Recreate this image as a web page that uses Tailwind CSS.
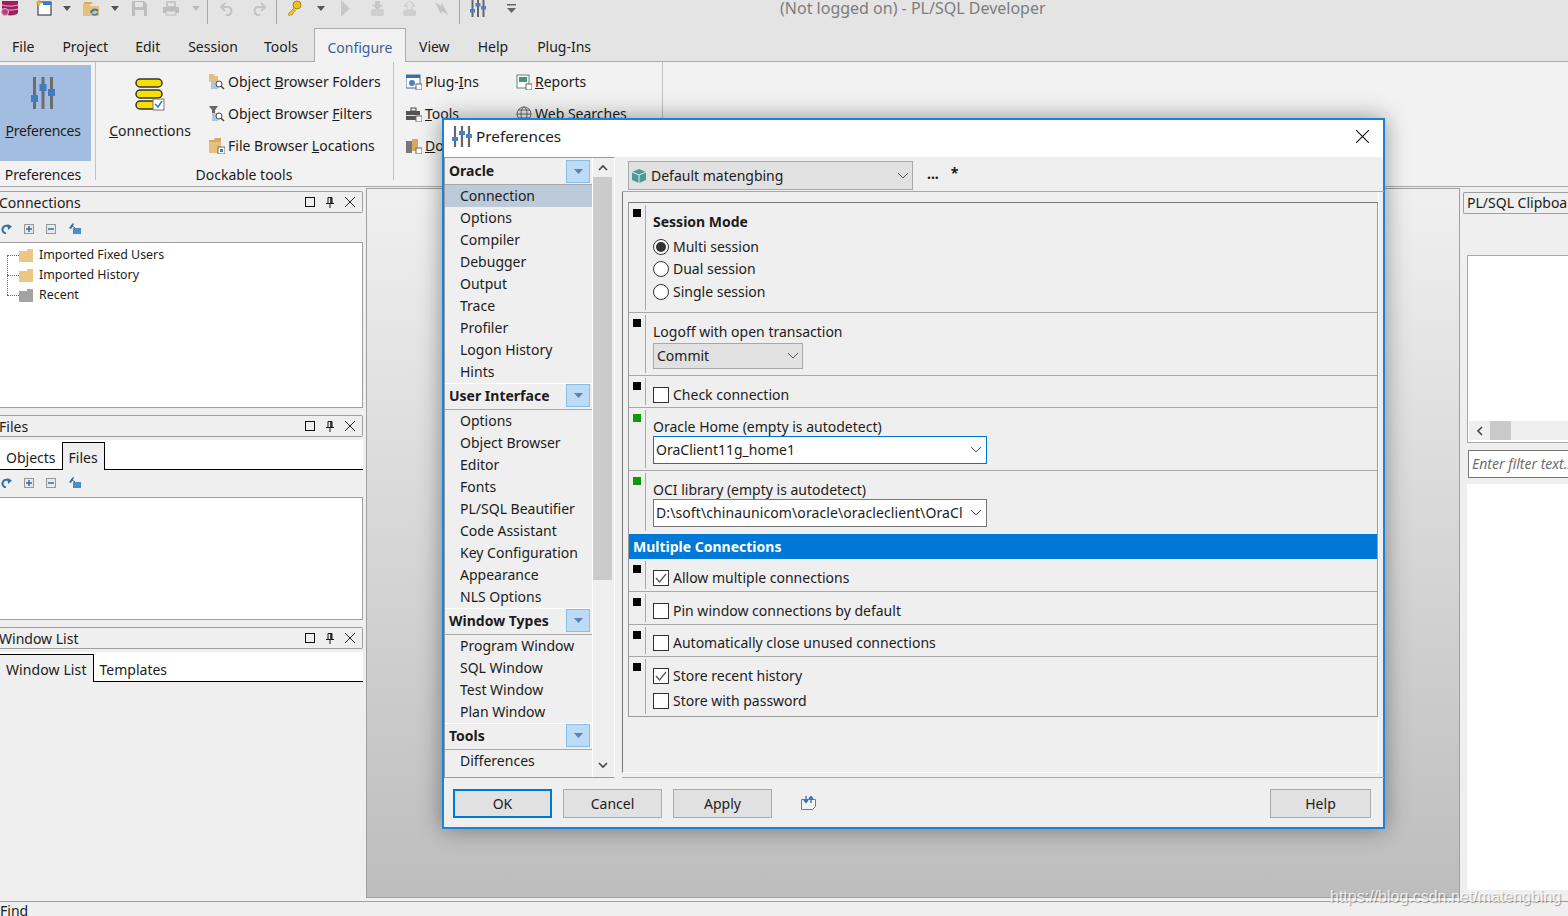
<!DOCTYPE html>
<html>
<head>
<meta charset="utf-8">
<script src="https://cdn.jsdelivr.net/npm/@tailwindcss/browser@4"></script>
</head>
<body class="m-0">
<div class="relative w-[1568px] h-[916px] overflow-hidden flex flex-col bg-[#efefef] text-[#1c1c1c] text-[14px] leading-[20px] font-['Noto_Sans',sans-serif]">

  <!-- quick access toolbar -->
  <div class="h-[28px] shrink-0 bg-[#e4e4e4] relative">
    <div class="h-[17px] flex items-center">
      <svg class="ml-[1px] w-[18px] h-[19px]" viewBox="0 0 18 19"><path d="M1 2h16v12c-2 3-10 3-16 1z" fill="#a31d5c"/><path d="M1 6c4 1.500 12 1.500 16 0M1 10c4 1.500 12 1.500 16 0" stroke="#e8b6cc" fill="none"/><circle cx="4" cy="13" r="3.500" fill="#b0417c" stroke="#e8b6cc"/></svg>
      <svg class="ml-[17px] w-[16px] h-[17px]" viewBox="0 0 16 17"><rect x="2" y="2" width="13" height="13" fill="#fff" stroke="#222"/><rect x="7" y="2" width="8" height="3" fill="#3a7cc0"/><path d="M3 0v6M0 3h6" stroke="#e8b23a" stroke-width="1.500"/></svg>
      <svg class="ml-[11px] w-[9px] h-[5px]" viewBox="0 0 9 5"><path d="M0 0h8L4 5z" fill="#555"/></svg>
      <svg class="ml-[11px] w-[17px] h-[16px]" viewBox="0 0 17 16"><path d="M0 3h6l2 2h8v10H0z" fill="#e8c07a"/><path d="M1 1h7l2 2H1z" fill="#d9a760"/><path d="M8 12a4 4 0 0 1 7-2" stroke="#2f7ec0" stroke-width="2" fill="none"/><path d="M9 13a4 4 0 0 0 6-1" stroke="#2f7ec0" stroke-width="1.500" fill="none"/></svg>
      <svg class="ml-[11px] w-[9px] h-[5px]" viewBox="0 0 9 5"><path d="M0 0h8L4 5z" fill="#555"/></svg>
      <svg class="ml-[12px] w-[15px] h-[15px]" viewBox="0 0 15 15"><path d="M0 0h12l3 3v12H0z" fill="#bdbdbd"/><rect x="3" y="1" width="8" height="5" fill="#e4e4e4"/><rect x="3" y="9" width="9" height="6" fill="#e4e4e4"/></svg>
      <svg class="ml-[16px] w-[16px] h-[15px]" viewBox="0 0 16 15"><rect x="4" y="1" width="8" height="5" fill="none" stroke="#bdbdbd" stroke-width="1.500"/><rect x="0" y="6" width="16" height="6" fill="#bdbdbd"/><rect x="3" y="10" width="10" height="4" fill="#e4e4e4" stroke="#bdbdbd"/></svg>
      <svg class="ml-[13px] w-[9px] h-[5px]" viewBox="0 0 9 5"><path d="M0 0h8L4 5z" fill="#bdbdbd"/></svg>
      <div class="ml-[6px] w-px h-[24px] bg-[#a6a6a6] mt-[7px]"></div>
      <svg class="ml-[12px] w-[15px] h-[14px]" viewBox="0 0 15 14"><path d="M5 1 1 5l4 4M1 5h8a4.500 4.500 0 0 1 0 8H6" fill="none" stroke="#c4c4c4" stroke-width="2"/></svg>
      <svg class="ml-[16px] w-[15px] h-[14px]" viewBox="0 0 15 14"><path d="M10 1l4 4-4 4M14 5H6a4.500 4.500 0 0 0 0 8h3" fill="none" stroke="#c4c4c4" stroke-width="2"/></svg>
      <div class="ml-[10px] w-px h-[24px] bg-[#a6a6a6] mt-[7px]"></div>
      <svg class="ml-[10px] w-[15px] h-[17px]" viewBox="0 0 15 17"><circle cx="10" cy="5" r="4" fill="#f0c020" stroke="#a88410"/><path d="M7 8 1 14l1.500 2L4 14.500l1 .5 1-2 3-3" fill="#f0c020" stroke="#a88410" stroke-width=".7"/></svg>
      <svg class="ml-[15px] w-[9px] h-[5px]" viewBox="0 0 9 5"><path d="M0 0h8L4 5z" fill="#555"/></svg>
      <svg class="ml-[15px] w-[9px] h-[17px]" viewBox="0 0 9 17"><path d="M0 0l9 8.500L0 17z" fill="#c8c8c8"/></svg>
      <svg class="ml-[21px] w-[13px] h-[15px]" viewBox="0 0 13 15"><path d="M4 0h5v4h3L6.500 9 1 4h3z" fill="#c8c8c8"/><rect x="0" y="8" width="13" height="7" rx="2" fill="#cfcfcf"/></svg>
      <svg class="ml-[19px] w-[13px] h-[15px]" viewBox="0 0 13 15"><path d="M6.500 0 12 5H9v4H4V5H1z" fill="#e4e4e4" stroke="#c8c8c8"/><rect x="0" y="9" width="13" height="6" rx="2" fill="#cfcfcf"/></svg>
      <svg class="ml-[19px] w-[13px] h-[13px]" viewBox="0 0 13 13"><path d="M0 0l6 4 1-3 6 12-6-4-1 3z" fill="#c4c4c4"/></svg>
      <div class="ml-[11px] w-px h-[24px] bg-[#a6a6a6] mt-[7px]"></div>
      <svg class="ml-[10px] w-[16px] h-[17px]" viewBox="0 0 16 17"><path d="M2.500 0v17M8 0v17M13.500 0v17" stroke="#666" stroke-width="2"/><rect x="0" y="9" width="5" height="3.500" fill="#4a82c2"/><rect x="5.500" y="3" width="5" height="3.500" fill="#4a82c2"/><rect x="11" y="6" width="5" height="3.500" fill="#4a82c2"/></svg>
      <svg class="ml-[21px] w-[9px] h-[9px]" viewBox="0 0 9 9"><path d="M0 0h9v1.500H0zM0 4h9L4.500 9z" fill="#666"/></svg>
      <span class="ml-[264px] -mt-[1px] text-[#7d7d7d] text-[16px] whitespace-nowrap">(Not logged on) - PL/SQL Developer</span>
    </div>
  </div>

  <!-- ribbon tabs -->
  <div class="h-[34px] shrink-0 bg-[#e4e4e4] border-b border-[#ababab] flex items-start relative">
    <span class="ml-[12px] mt-[9px]">File</span>
    <span class="ml-[28px] mt-[9px]">Project</span>
    <span class="ml-[27px] mt-[9px]">Edit</span>
    <span class="ml-[28px] mt-[9px]">Session</span>
    <span class="ml-[26px] mt-[9px]">Tools</span>
    <span class="ml-[16px] w-[92px] h-[34px] pt-[9px] text-center text-[#3c5f96] bg-[#f2f2f2] border border-b-0 border-[#ababab]">Configure</span>
    <span class="ml-[13px] mt-[9px]">View</span>
    <span class="ml-[28px] mt-[9px]">Help</span>
    <span class="ml-[29px] mt-[9px]">Plug-Ins</span>
  </div>

  <!-- ribbon body -->
  <div class="h-[125px] shrink-0 bg-[#f2f2f2] border-b border-[#a8a8a8] flex">
    <div class="w-[96px] shrink-0 border-r border-[#c2c2c2] h-[118px] flex flex-col pt-[3px]">
      <div class="w-[91px] h-[96px] shrink-0 bg-[#a3bde0] flex flex-col items-center pr-[5px]">
        <svg class="mt-[12px] w-[24px] h-[32px] shrink-0" viewBox="0 0 24 32"><path d="M3.500 0v32M12 0v32M20.500 0v32" stroke="#6d6d6d" stroke-width="3"/><rect x="0" y="18" width="7" height="7" fill="#3f7cc0"/><rect x="8.500" y="7" width="7" height="7" fill="#3f7cc0"/><rect x="17" y="12" width="7" height="7" fill="#3f7cc0"/></svg>
        <span class="mt-[12px] tracking-[-0.25px]"><u>P</u>references</span>
      </div>
      <span class="w-[86px] text-center mt-[4px] shrink-0 tracking-[-0.15px]">Preferences</span>
    </div>
    <div class="w-[298px] shrink-0 border-r border-[#c2c2c2] h-[118px] flex flex-col">
      <div class="h-[98px] shrink-0 flex">
        <div class="w-[113px] flex flex-col items-center pt-[16px] pr-[5px]">
          <svg class="w-[30px] h-[33px] shrink-0" viewBox="0 0 30 33"><rect x="1" y="1" width="26" height="8" rx="4" fill="#f5e000" stroke="#333" stroke-width="1.500"/><rect x="1" y="12" width="26" height="8" rx="4" fill="#f5e000" stroke="#333" stroke-width="1.500"/><rect x="1" y="23" width="26" height="8" rx="4" fill="#f5e000" stroke="#333" stroke-width="1.500"/><rect x="18" y="21" width="11" height="11" fill="#fff" stroke="#777"/><path d="M20 26l3 3 4-6" fill="none" stroke="#3a78c0" stroke-width="1.500"/></svg>
          <span class="mt-[10px]"><u>C</u>onnections</span>
        </div>
        <div class="flex flex-col pt-[10px] gap-[12px]">
          <div class="h-[20px] flex items-center gap-[3px] whitespace-nowrap"><svg class="w-[16px] h-[16px] shrink-0" viewBox="0 0 16 16"><path d="M0 0h5l1 2h3v6H0z" fill="#e8c07a"/><rect x="2" y="8" width="7" height="7" fill="#a9c8dc"/><circle cx="10" cy="10" r="3" fill="#fff" stroke="#444"/><path d="M12 12l3 3" stroke="#444" stroke-width="1.500"/></svg><span>Object <u>B</u>rowser Folders</span></div>
          <div class="h-[20px] flex items-center gap-[3px] whitespace-nowrap"><svg class="w-[16px] h-[16px] shrink-0" viewBox="0 0 16 16"><path d="M0 0h9L6 4v6H3V4z" fill="#666"/><rect x="3" y="7" width="6" height="8" fill="#a9c8dc"/><circle cx="10" cy="10" r="3" fill="#fff" stroke="#444"/><path d="M12 12l3 3" stroke="#444" stroke-width="1.500"/></svg><span>Object Browser <u>F</u>ilters</span></div>
          <div class="h-[20px] flex items-center gap-[3px] whitespace-nowrap"><svg class="w-[16px] h-[16px] shrink-0" viewBox="0 0 16 16"><path d="M0 2h5l1-2h6v5H0z" fill="#d9a760"/><rect x="0" y="4" width="12" height="11" fill="#e8c07a"/><rect x="9" y="9" width="7" height="7" fill="#fff" stroke="#666"/><rect x="11" y="11" width="3" height="3" fill="#3a78c0"/></svg><span>File Browser <u>L</u>ocations</span></div>
        </div>
      </div>
      <span class="text-center mt-[5px] pr-[1px] shrink-0">Dockable tools</span>
    </div>
    <div class="w-[269px] shrink-0 border-r border-[#c2c2c2] h-[118px] flex pt-[10px] pl-[12px]">
      <div class="w-[110px] flex flex-col gap-[12px]">
        <div class="h-[20px] flex items-center gap-[3px] whitespace-nowrap"><svg class="w-[16px] h-[16px] shrink-0" viewBox="0 0 16 16"><rect x="0" y="1" width="14" height="13" fill="#fff" stroke="#3a6ea8"/><rect x="0" y="1" width="14" height="3" fill="#3a6ea8"/><circle cx="6" cy="9" r="3" fill="#4a82c2"/><rect x="10" y="10" width="6" height="6" fill="#fff" stroke="#666"/></svg><span>Plug-<u>I</u>ns</span></div>
        <div class="h-[20px] flex items-center gap-[3px] whitespace-nowrap"><svg class="w-[16px] h-[16px] shrink-0" viewBox="0 0 16 16"><rect x="5" y="2" width="5" height="3" fill="none" stroke="#444"/><rect x="0" y="5" width="14" height="9" fill="#555"/><rect x="0" y="9" width="14" height="1" fill="#ddd"/><rect x="10" y="10" width="6" height="6" fill="#fff" stroke="#666"/></svg><span><u>T</u>ools</span></div>
        <div class="h-[20px] flex items-center gap-[3px] whitespace-nowrap"><svg class="w-[16px] h-[16px] shrink-0" viewBox="0 0 16 16"><rect x="0" y="3" width="6" height="12" fill="#777"/><rect x="6" y="1" width="6" height="12" fill="#d9a760"/><rect x="10" y="10" width="6" height="6" fill="#fff" stroke="#666"/></svg><span><u>D</u>ocuments</span></div>
      </div>
      <div class="flex flex-col gap-[12px]">
        <div class="h-[20px] flex items-center gap-[3px] whitespace-nowrap"><svg class="w-[16px] h-[16px] shrink-0" viewBox="0 0 16 16"><rect x="1" y="1" width="12" height="13" fill="#fff" stroke="#4d8f78"/><rect x="3" y="3" width="8" height="5" fill="#4d8f78"/><rect x="10" y="10" width="6" height="6" fill="#fff" stroke="#666"/></svg><span><u>R</u>eports</span></div>
        <div class="h-[20px] flex items-center gap-[3px] whitespace-nowrap"><svg class="w-[16px] h-[16px] shrink-0" viewBox="0 0 16 16"><circle cx="8" cy="8" r="7" fill="none" stroke="#666"/><ellipse cx="8" cy="8" rx="3" ry="7" fill="none" stroke="#666"/><path d="M1 8h14M2 4h12M2 12h12" stroke="#666"/></svg><span>Web Searches</span></div>
      </div>
    </div>
  </div>

  <!-- main area -->
  <div class="flex-1 min-h-0 flex">
    <!-- left dock -->
    <div class="w-[363px] shrink-0 flex flex-col pt-[4px]">
      <div class="h-[22px] shrink-0 border border-l-0 border-[#a0a0a0] rounded-r-[2px] flex items-center justify-between pr-[7px]">
        <span class="-ml-px pt-[2px]">Connections</span>
        <div class="flex items-center gap-[10px]">
          <svg class="w-[10px] h-[10px]" viewBox="0 0 10 10"><rect x=".5" y=".5" width="9" height="9" fill="none" stroke="#111"/></svg>
          <svg class="w-[10px] h-[11px]" viewBox="0 0 10 11"><path d="M3 .5h4v6H3zM1 6.500h8M5 7v4" fill="none" stroke="#111"/><path d="M6 1v5" stroke="#111" stroke-width="1.500"/></svg>
          <svg class="w-[10px] h-[10px]" viewBox="0 0 10 10"><path d="M0 0l10 10M10 0 0 10" stroke="#222"/></svg>
        </div>
      </div>
      <div class="h-[29px] shrink-0 flex items-center pl-[1px] pt-[2px]">
        <svg class="w-[11px] h-[10px]" viewBox="0 0 11 10"><path d="M5 9.500A4 4 0 0 1 1.500 5 4 4 0 0 1 7 2" fill="none" stroke="#2f6fae" stroke-width="2"/><path d="M6.500 0 11 2.500 7 6z" fill="#2f6fae"/></svg>
        <svg class="ml-[12px] w-[10px] h-[10px]" viewBox="0 0 10 10"><rect x=".5" y=".5" width="9" height="9" fill="#e8e8e8" stroke="#999"/><path d="M2 5h6M5 2v6" stroke="#2f6fae" stroke-width="1.500"/></svg>
        <svg class="ml-[12px] w-[10px] h-[10px]" viewBox="0 0 10 10"><rect x=".5" y=".5" width="9" height="9" fill="#e8e8e8" stroke="#999"/><path d="M2 5h6" stroke="#2f6fae" stroke-width="1.500"/></svg>
        <svg class="ml-[13px] w-[12px] h-[11px]" viewBox="0 0 12 11"><path d="M0 5l4-5 1 1-3 5z" fill="#2f6fae"/><rect x="4" y="5" width="8" height="6" fill="#4a8ed0"/><path d="M2 2l4 3" stroke="#555"/></svg>
      </div>
      <div class="h-[166px] shrink-0 bg-white border border-l-0 border-[#a0a0a0] relative pt-[2px] text-[12.400px]">
        <div class="absolute left-[7px] top-[12px] h-[40px] w-[12px] border-l border-dotted border-[#666]"></div>
        <div class="h-[20px] flex items-center relative"><div class="w-[12px] ml-[7px] border-t border-dotted border-[#666]"></div><svg class="w-[14px] h-[13px]" viewBox="0 0 14 13"><path d="M0 2h8V0h6v13H0z" fill="#ebc685"/></svg><span class="ml-[6px]">Imported Fixed Users</span></div>
        <div class="h-[20px] flex items-center relative"><div class="w-[12px] ml-[7px] border-t border-dotted border-[#666]"></div><svg class="w-[14px] h-[13px]" viewBox="0 0 14 13"><path d="M0 2h8V0h6v13H0z" fill="#ebc685"/></svg><span class="ml-[6px]">Imported History</span></div>
        <div class="h-[20px] flex items-center relative"><div class="w-[12px] ml-[7px] border-t border-dotted border-[#666]"></div><svg class="w-[14px] h-[13px]" viewBox="0 0 14 13"><path d="M0 2h8V0h6v13H0z" fill="#a3a3a3"/></svg><span class="ml-[6px]">Recent</span></div>
      </div>

      <div class="mt-[7px] h-[22px] shrink-0 border border-l-0 border-[#a0a0a0] rounded-r-[2px] flex items-center justify-between pr-[7px]">
        <span class="-ml-px pt-[2px]">Files</span>
        <div class="flex items-center gap-[10px]">
          <svg class="w-[10px] h-[10px]" viewBox="0 0 10 10"><rect x=".5" y=".5" width="9" height="9" fill="none" stroke="#111"/></svg>
          <svg class="w-[10px] h-[11px]" viewBox="0 0 10 11"><path d="M3 .5h4v6H3zM1 6.500h8M5 7v4" fill="none" stroke="#111"/><path d="M6 1v5" stroke="#111" stroke-width="1.500"/></svg>
          <svg class="w-[10px] h-[10px]" viewBox="0 0 10 10"><path d="M0 0l10 10M10 0 0 10" stroke="#222"/></svg>
        </div>
      </div>
      <div class="mt-[3px] h-[30px] shrink-0 bg-white border-b border-black flex items-end">
        <span class="pl-[6px] pr-[6px] h-[27px] pt-[6px]">Objects</span>
        <span class="px-[6px] h-[28px] pt-[5px] bg-[#efefef] border border-b-0 border-black -mb-px">Files</span>
      </div>
      <div class="h-[27px] shrink-0 flex items-center pl-[1px] pb-[2px]">
        <svg class="w-[11px] h-[10px]" viewBox="0 0 11 10"><path d="M5 9.500A4 4 0 0 1 1.500 5 4 4 0 0 1 7 2" fill="none" stroke="#2f6fae" stroke-width="2"/><path d="M6.500 0 11 2.500 7 6z" fill="#2f6fae"/></svg>
        <svg class="ml-[12px] w-[10px] h-[10px]" viewBox="0 0 10 10"><rect x=".5" y=".5" width="9" height="9" fill="#e8e8e8" stroke="#999"/><path d="M2 5h6M5 2v6" stroke="#2f6fae" stroke-width="1.500"/></svg>
        <svg class="ml-[12px] w-[10px] h-[10px]" viewBox="0 0 10 10"><rect x=".5" y=".5" width="9" height="9" fill="#e8e8e8" stroke="#999"/><path d="M2 5h6" stroke="#2f6fae" stroke-width="1.500"/></svg>
        <svg class="ml-[13px] w-[12px] h-[11px]" viewBox="0 0 12 11"><path d="M0 5l4-5 1 1-3 5z" fill="#2f6fae"/><rect x="4" y="5" width="8" height="6" fill="#4a8ed0"/><path d="M2 2l4 3" stroke="#555"/></svg>
      </div>
      <div class="h-[123px] shrink-0 bg-white border border-l-0 border-[#a0a0a0]"></div>

      <div class="mt-[7px] h-[22px] shrink-0 border border-l-0 border-[#a0a0a0] rounded-r-[2px] flex items-center justify-between pr-[7px]">
        <span class="-ml-px pt-[2px]">Window List</span>
        <div class="flex items-center gap-[10px]">
          <svg class="w-[10px] h-[10px]" viewBox="0 0 10 10"><rect x=".5" y=".5" width="9" height="9" fill="none" stroke="#111"/></svg>
          <svg class="w-[10px] h-[11px]" viewBox="0 0 10 11"><path d="M3 .5h4v6H3zM1 6.500h8M5 7v4" fill="none" stroke="#111"/><path d="M6 1v5" stroke="#111" stroke-width="1.500"/></svg>
          <svg class="w-[10px] h-[10px]" viewBox="0 0 10 10"><path d="M0 0l10 10M10 0 0 10" stroke="#222"/></svg>
        </div>
      </div>
      <div class="mt-[3px] h-[30px] shrink-0 bg-white border-b border-black flex items-end">
        <span class="pl-[6px] pr-[6px] h-[28px] pt-[5px] bg-[#efefef] border-t border-r border-black -mb-px whitespace-nowrap tracking-[0.1px]">Window List</span>
        <span class="px-[6px] h-[27px] pt-[6px]">Templates</span>
      </div>
    </div>

    <!-- centre workspace -->
    <div class="ml-[3px] w-[1094px] h-[710px] shrink-0 mt-[1px] border border-[#a0a0a0] bg-gradient-to-b from-[#f0f0f0] to-[#bdbdbd]"></div>

    <!-- right dock -->
    <div class="flex-1 min-w-0 flex flex-col pl-[3px] pt-[5px] overflow-hidden">
      <div class="h-[22px] shrink-0 border border-r-0 border-[#a0a0a0] rounded-l-[2px] flex items-center pl-[3px] whitespace-nowrap overflow-hidden">PL/SQL Clipboard</div>
      <div class="mt-[41px] ml-[4px] h-[188px] shrink-0 bg-white border border-r-0 border-[#a8a8a8] flex flex-col justify-end pb-[2px]">
        <div class="h-[19px] bg-[#efefef] ml-[1px] flex items-center">
          <svg class="ml-[7px] w-[8px] h-[10px]" viewBox="0 0 8 10"><path d="M6 1 2 5l4 4" fill="none" stroke="#444" stroke-width="1.600"/></svg>
          <div class="ml-[6px] w-[21px] h-[19px] bg-[#c9c9c9]"></div>
        </div>
      </div>
      <div class="mt-[7px] ml-[5px] h-[28px] shrink-0 bg-white border border-r-0 border-[#777] flex items-center pl-[3px] italic text-[#6e6e6e] whitespace-nowrap overflow-hidden">Enter filter text...</div>
      <div class="mt-[6px] ml-[4px] h-[406px] shrink-0 bg-white"></div>
    </div>
  </div>

  <!-- status bar -->
  <div class="h-[15px] shrink-0 border-t border-[#a0a0a0] leading-[18px]">Find</div>

  <!-- watermark -->
  <span class="absolute left-[1330px] top-[887px] text-[16px] font-['Liberation_Sans',sans-serif] text-white/80 whitespace-nowrap [text-shadow:1px_1px_1px_rgba(0,0,0,0.35)]">https://blog.csdn.net/matengbing</span>

  <!-- Preferences dialog -->
  <div class="absolute left-[442px] top-[118px] w-[943px] h-[711px] border-2 border-[#1a82d8] bg-[#efefef] shadow-[0_0_22px_rgba(0,0,0,0.4)] flex flex-col">
    <div class="h-[37px] shrink-0 bg-white flex items-center pl-[8px] pr-[14px] pb-[5px]">
      <svg class="w-[20px] h-[21px]" viewBox="0 0 20 21"><path d="M3 0v21M10 0v21M17 0v21" stroke="#666" stroke-width="2.200"/><rect x="0" y="11" width="6" height="4" fill="#4a82c2"/><rect x="7" y="5" width="6" height="4" fill="#4a82c2"/><rect x="14" y="8" width="6" height="4" fill="#4a82c2"/></svg>
      <span class="ml-[4px] text-[15.300px]">Preferences</span>
      <svg class="ml-auto w-[13px] h-[13px]" viewBox="0 0 13 13"><path d="M0 0l13 13M13 0 0 13" stroke="#111" stroke-width="1.100"/></svg>
    </div>
    <div class="h-[619px] shrink-0 flex">
      <!-- category list -->
      <div class="w-[171px] h-[621px] shrink-0 border border-[#9a9a9a] border-r-[#fff] flex overflow-hidden">
        <div class="w-[148px] shrink-0 overflow-hidden border-r border-[#fff]">
          <div class="h-[27px] flex items-center justify-between border-b border-[#a8a8a8] pl-[4px] pr-[2px] font-bold"><span>Oracle</span><span class="w-[24px] h-[23px] bg-[#bddbf4] border border-[#86bdea] flex items-center justify-center"><svg class="w-[9px] h-[5px]" viewBox="0 0 9 5"><path d="M0 0h9L4.500 5z" fill="#5a82b4"/></svg></span></div>
          <div class="h-[22px] pl-[15px] flex items-center bg-[#bccad9]">Connection</div>
          <div class="h-[22px] pl-[15px] flex items-center">Options</div>
          <div class="h-[22px] pl-[15px] flex items-center">Compiler</div>
          <div class="h-[22px] pl-[15px] flex items-center">Debugger</div>
          <div class="h-[22px] pl-[15px] flex items-center">Output</div>
          <div class="h-[22px] pl-[15px] flex items-center">Trace</div>
          <div class="h-[22px] pl-[15px] flex items-center">Profiler</div>
          <div class="h-[22px] pl-[15px] flex items-center">Logon History</div>
          <div class="h-[22px] pl-[15px] flex items-center">Hints</div>
          <div class="h-[27px] flex items-center justify-between border-y border-t-white border-b-[#a8a8a8] pl-[4px] pr-[2px] pb-[2px] font-bold"><span>User Interface</span><span class="w-[24px] h-[23px] bg-[#bddbf4] border border-[#86bdea] flex items-center justify-center"><svg class="w-[9px] h-[5px]" viewBox="0 0 9 5"><path d="M0 0h9L4.500 5z" fill="#5a82b4"/></svg></span></div>
          <div class="h-[22px] pl-[15px] flex items-center">Options</div>
          <div class="h-[22px] pl-[15px] flex items-center">Object Browser</div>
          <div class="h-[22px] pl-[15px] flex items-center">Editor</div>
          <div class="h-[22px] pl-[15px] flex items-center">Fonts</div>
          <div class="h-[22px] pl-[15px] flex items-center">PL/SQL Beautifier</div>
          <div class="h-[22px] pl-[15px] flex items-center">Code Assistant</div>
          <div class="h-[22px] pl-[15px] flex items-center">Key Configuration</div>
          <div class="h-[22px] pl-[15px] flex items-center">Appearance</div>
          <div class="h-[22px] pl-[15px] flex items-center">NLS Options</div>
          <div class="h-[27px] flex items-center justify-between border-y border-t-white border-b-[#a8a8a8] pl-[4px] pr-[2px] pb-[2px] font-bold"><span>Window Types</span><span class="w-[24px] h-[23px] bg-[#bddbf4] border border-[#86bdea] flex items-center justify-center"><svg class="w-[9px] h-[5px]" viewBox="0 0 9 5"><path d="M0 0h9L4.500 5z" fill="#5a82b4"/></svg></span></div>
          <div class="h-[22px] pl-[15px] flex items-center">Program Window</div>
          <div class="h-[22px] pl-[15px] flex items-center">SQL Window</div>
          <div class="h-[22px] pl-[15px] flex items-center">Test Window</div>
          <div class="h-[22px] pl-[15px] flex items-center">Plan Window</div>
          <div class="h-[27px] flex items-center justify-between border-y border-t-white border-b-[#a8a8a8] pl-[4px] pr-[2px] pb-[2px] font-bold"><span>Tools</span><span class="w-[24px] h-[23px] bg-[#bddbf4] border border-[#86bdea] flex items-center justify-center"><svg class="w-[9px] h-[5px]" viewBox="0 0 9 5"><path d="M0 0h9L4.500 5z" fill="#5a82b4"/></svg></span></div>
          <div class="h-[22px] pl-[15px] flex items-center">Differences</div>
        </div>
        <div class="w-[21px] shrink-0 flex flex-col items-start">
          <div class="w-[19px] h-[19px] shrink-0 flex items-center justify-center"><svg class="w-[10px] h-[7px]" viewBox="0 0 10 7"><path d="M1 6l4-4 4 4" fill="none" stroke="#444" stroke-width="1.600"/></svg></div>
          <div class="w-[19px] h-[403px] shrink-0 bg-[#cbcbcb]"></div>
          <div class="w-[19px] mt-auto mb-[2px] h-[20px] shrink-0 flex items-center justify-center"><svg class="w-[10px] h-[7px]" viewBox="0 0 10 7"><path d="M1 1l4 4 4-4" fill="none" stroke="#444" stroke-width="1.600"/></svg></div>
        </div>
      </div>

      <!-- settings pane -->
      <div class="ml-[7px] w-[762px] h-[621px] shrink-0 flex flex-col border-b border-[#a8a8a8]">
        <div class="h-[35px] shrink-0 border-b border-[#a8a8a8] flex items-start pl-[6px] pt-[4px]">
          <div class="w-[285px] h-[29px] bg-[#e1e1e1] border border-[#a8a8a8] flex items-center pl-[3px] pr-[4px]">
            <svg class="w-[14px] h-[14px]" viewBox="0 0 14 14"><path d="M7 0l7 3v8l-7 3-7-3V3z" fill="#4d9a9a"/><path d="M0 3l7 3 7-3M7 6v8" stroke="#d8ecec" fill="none"/></svg>
            <span class="ml-[5px]">Default matengbing</span>
            <svg class="ml-auto w-[10px] h-[6px]" viewBox="0 0 10 6"><path d="M0 0l5 5 5-5" fill="none" stroke="#555"/></svg>
          </div>
          <span class="ml-[14px] mt-[3px] font-bold">...</span>
          <span class="ml-[12px] mt-[2px] font-bold">*</span>
        </div>
        <div class="flex-1 min-h-0 border-l border-[#777] border-r border-r-white border-b border-b-white mr-[5px] mb-[4px] pl-[5px] pt-[10px]">
          <div class="border border-t-[#777] border-x-[#999] border-b-[#999] w-[750px]">
            <!-- Session Mode -->
            <div class="h-[110px] flex border-b border-[#a8a8a8]">
              <div class="w-[16px] shrink-0 pl-[4px] pt-[6px]"><div class="w-[8px] h-[8px] bg-black"></div></div>
              <div class="w-[8px] shrink-0 border-l border-[#a8a8a8] mt-[2px] mb-[2px]"></div>
              <div class="flex flex-col pt-[8px]">
                <div class="h-[22px] flex items-center font-bold">Session Mode</div>
                <div class="h-[22px] mt-[3px] flex items-center gap-[4px]"><span class="w-[16px] h-[16px] rounded-full border border-[#333] bg-white flex items-center justify-center"><span class="w-[10px] h-[10px] rounded-full bg-[#333]"></span></span>Multi session</div>
                <div class="h-[22px] flex items-center gap-[4px]"><span class="w-[16px] h-[16px] rounded-full border border-[#333] bg-white"></span>Dual session</div>
                <div class="h-[24px] flex items-center gap-[4px]"><span class="w-[16px] h-[16px] rounded-full border border-[#333] bg-white"></span>Single session</div>
              </div>
            </div>
            <!-- Logoff -->
            <div class="h-[63px] flex border-b border-[#a8a8a8]">
              <div class="w-[16px] shrink-0 pl-[4px] pt-[6px]"><div class="w-[8px] h-[8px] bg-black"></div></div>
              <div class="w-[8px] shrink-0 border-l border-[#a8a8a8] mt-[2px] mb-[2px]"></div>
              <div class="flex flex-col pt-[9px]">
                <div class="h-[20px] flex items-center">Logoff with open transaction</div>
                <div class="w-[150px] h-[26px] mt-[1px] bg-[#e1e1e1] border border-[#a8a8a8] flex items-center pl-[3px] pr-[4px]">Commit<svg class="ml-auto w-[10px] h-[6px]" viewBox="0 0 10 6"><path d="M0 0l5 5 5-5" fill="none" stroke="#555"/></svg></div>
              </div>
            </div>
            <!-- Check -->
            <div class="h-[32px] flex border-b border-[#a8a8a8]">
              <div class="w-[16px] shrink-0 pl-[4px] pt-[6px]"><div class="w-[8px] h-[8px] bg-black"></div></div>
              <div class="w-[8px] shrink-0 border-l border-[#a8a8a8] mt-[2px] mb-[2px]"></div>
              <div class="h-[24px] mt-[7px] flex items-center gap-[4px]"><span class="w-[16px] h-[16px] border border-[#333] bg-white"></span>Check connection</div>
            </div>
            <!-- Oracle Home -->
            <div class="h-[63px] flex border-b border-[#a8a8a8]">
              <div class="w-[16px] shrink-0 pl-[4px] pt-[6px]"><div class="w-[8px] h-[8px] bg-[#0a9a0a]"></div></div>
              <div class="w-[8px] shrink-0 border-l border-[#a8a8a8] mt-[2px] mb-[2px]"></div>
              <div class="flex flex-col pt-[9px]">
                <div class="h-[19px] flex items-center">Oracle Home (empty is autodetect)</div>
                <div class="w-[334px] h-[28px] bg-white border border-[#0078d7] flex items-center pl-[2px] pr-[5px]">OraClient11g_home1<svg class="ml-auto w-[10px] h-[6px]" viewBox="0 0 10 6"><path d="M0 0l5 5 5-5" fill="none" stroke="#555"/></svg></div>
              </div>
            </div>
            <!-- OCI -->
            <div class="h-[63px] flex">
              <div class="w-[16px] shrink-0 pl-[4px] pt-[6px]"><div class="w-[8px] h-[8px] bg-[#0a9a0a]"></div></div>
              <div class="w-[8px] shrink-0 border-l border-[#a8a8a8] mt-[2px] mb-[3px]"></div>
              <div class="flex flex-col pt-[9px]">
                <div class="h-[19px] flex items-center">OCI library (empty is autodetect)</div>
                <div class="w-[334px] h-[28px] bg-white border border-[#777] flex items-center pl-[2px] pr-[5px]"><span class="w-[309px] overflow-hidden whitespace-nowrap tracking-[0.1px]">D:\soft\chinaunicom\oracle\oracleclient\OraCl</span><svg class="ml-auto w-[10px] h-[6px]" viewBox="0 0 10 6"><path d="M0 0l5 5 5-5" fill="none" stroke="#555"/></svg></div>
              </div>
            </div>
            <!-- header -->
            <div class="h-[25px] bg-[#0078d7] text-white font-bold flex items-center pl-[4px]">Multiple Connections</div>
            <!-- Allow -->
            <div class="h-[33px] flex border-b border-[#a8a8a8]">
              <div class="w-[16px] shrink-0 pl-[4px] pt-[6px]"><div class="w-[8px] h-[8px] bg-black"></div></div>
              <div class="w-[8px] shrink-0 border-l border-[#a8a8a8] mt-[2px] mb-[2px]"></div>
              <div class="h-[24px] mt-[7px] flex items-center gap-[4px]"><span class="w-[16px] h-[16px] border border-[#333] bg-white flex items-center justify-center"><svg class="w-[12px] h-[10px]" viewBox="0 0 12 10"><path d="M1 5l3.500 4L11 1" fill="none" stroke="#555" stroke-width="1.200"/></svg></span>Allow multiple connections</div>
            </div>
            <!-- Pin -->
            <div class="h-[33px] flex border-b border-[#a8a8a8]">
              <div class="w-[16px] shrink-0 pl-[4px] pt-[6px]"><div class="w-[8px] h-[8px] bg-black"></div></div>
              <div class="w-[8px] shrink-0 border-l border-[#a8a8a8] mt-[2px] mb-[2px]"></div>
              <div class="h-[24px] mt-[7px] flex items-center gap-[4px]"><span class="w-[16px] h-[16px] border border-[#333] bg-white"></span>Pin window connections by default</div>
            </div>
            <!-- Auto -->
            <div class="h-[32px] flex border-b border-[#a8a8a8]">
              <div class="w-[16px] shrink-0 pl-[4px] pt-[6px]"><div class="w-[8px] h-[8px] bg-black"></div></div>
              <div class="w-[8px] shrink-0 border-l border-[#a8a8a8] mt-[2px] mb-[2px]"></div>
              <div class="h-[24px] mt-[6px] flex items-center gap-[4px]"><span class="w-[16px] h-[16px] border border-[#333] bg-white"></span>Automatically close unused connections</div>
            </div>
            <!-- Store -->
            <div class="h-[59px] flex">
              <div class="w-[16px] shrink-0 pl-[4px] pt-[6px]"><div class="w-[8px] h-[8px] bg-black"></div></div>
              <div class="w-[8px] shrink-0 border-l border-[#a8a8a8] mt-[2px] mb-[2px]"></div>
              <div class="flex flex-col pt-[7px]">
                <div class="h-[24px] flex items-center gap-[4px]"><span class="w-[16px] h-[16px] border border-[#333] bg-white flex items-center justify-center"><svg class="w-[12px] h-[10px]" viewBox="0 0 12 10"><path d="M1 5l3.500 4L11 1" fill="none" stroke="#555" stroke-width="1.200"/></svg></span>Store recent history</div>
                <div class="h-[24px] mt-px flex items-center gap-[4px]"><span class="w-[16px] h-[16px] border border-[#333] bg-white"></span>Store with password</div>
              </div>
            </div>
          </div>
        </div>
      </div>
    </div>
    <!-- buttons -->
    <div class="h-[51px] shrink-0 flex items-start pt-[13px] pl-[9px] pr-[12px]">
      <div class="w-[99px] h-[29px] bg-[#e1e1e1] border-2 border-[#0078d7] flex items-center justify-center">OK</div>
      <div class="ml-[11px] w-[99px] h-[29px] bg-[#e1e1e1] border border-[#ababab] flex items-center justify-center">Cancel</div>
      <div class="ml-[11px] w-[99px] h-[29px] bg-[#e1e1e1] border border-[#ababab] flex items-center justify-center">Apply</div>
      <svg class="ml-[29px] mt-[7px] w-[15px] h-[14px]" viewBox="0 0 15 14"><path d="M.5 3.500h14v7l-3 3h-11z" fill="#f4f4f4" stroke="#777"/><path d="M5 0v6M3 4l2 2.500L7 4M10 7V1M8 3l2-2.500L12 3" fill="none" stroke="#2f6fae" stroke-width="1.300"/></svg>
      <div class="ml-auto w-[101px] h-[29px] bg-[#e1e1e1] border border-[#ababab] flex items-center justify-center">Help</div>
    </div>
  </div>
</div>
</body>
</html>
